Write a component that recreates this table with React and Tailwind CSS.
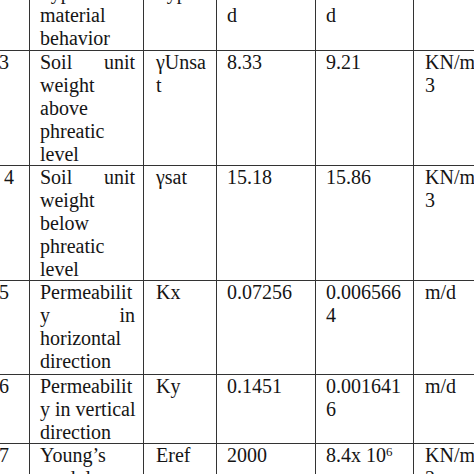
const cell = "border-r border-b border-[#333] pl-[10px] pr-[5px] overflow-hidden";

function Just({ a, b }) {
  return (
    <div className="flex justify-between pr-[3px]">
      <span>{a}</span>
      <span>{b}</span>
    </div>
  );
}

function Lines({ items }) {
  return items.map((t, i) => (
    <div key={i} className="whitespace-nowrap">
      {t}
    </div>
  ));
}

const rows = [
  {
    n: "2",
    name: ["Type of", "material", "behavior"],
    sym: ["Type"],
    a: ["Undraine", "d"],
    b: ["Undraine", "d"],
    unit: [],
  },
  {
    n: "3",
    name: [<Just key="j" a="Soil" b="unit" />, "weight", "above", "phreatic", "level"],
    sym: ["γUnsa", "t"],
    a: ["8.33"],
    b: ["9.21"],
    unit: ["KN/m", "3"],
  },
  {
    n: "4",
    shift: true,
    name: [<Just key="j" a="Soil" b="unit" />, "weight", "below", "phreatic", "level"],
    sym: ["γsat"],
    a: ["15.18"],
    b: ["15.86"],
    unit: ["KN/m", "3"],
  },
  {
    n: "5",
    name: ["Permeabilit", <Just key="j" a="y" b="in" />, "horizontal", "direction"],
    sym: ["Kx"],
    a: ["0.07256"],
    b: ["0.006566", "4"],
    unit: ["m/d"],
  },
  {
    n: "6",
    name: ["Permeabilit", "y in vertical", "direction"],
    sym: ["Ky"],
    a: ["0.1451"],
    b: ["0.001641", "6"],
    unit: ["m/d"],
  },
  {
    n: "7",
    name: ["Young’s", "modulus"],
    sym: ["Eref"],
    a: ["2000"],
    b: [
      <span key="s">
        8.4x 10<sup className="text-[13px]">6</sup>
      </span>,
    ],
    unit: ["KN/m", "2"],
  },
];

export default function App() {
  return (
    <div className="w-[474px] h-[474px] overflow-hidden bg-white">
      <div
        className="ml-[-12px] mt-[-20px] grid grid-cols-[41px_114px_73px_99px_98px_80px] grid-rows-[70px_115px_115px_94px_69px_80px] border-l border-t border-[#333] text-[20px] leading-[23px] text-[#151515]"
        style={{ fontFamily: '"Liberation Serif", "Times New Roman", serif' }}
      >
        {rows.map((r) => (
          <div key={r.n} className="contents">
            <div className={cell + (r.shift ? " pl-[15px]" : "")}>{r.n}</div>
            <div className={cell}>
              <Lines items={r.name} />
            </div>
            <div className={cell + " pl-[12px]"}>
              <Lines items={r.sym} />
            </div>
            <div className={cell}>
              <Lines items={r.a} />
            </div>
            <div className={cell}>
              <Lines items={r.b} />
            </div>
            <div className={cell + " pl-[11px]"}>
              <Lines items={r.unit} />
            </div>
          </div>
        ))}
      </div>
    </div>
  );
}
